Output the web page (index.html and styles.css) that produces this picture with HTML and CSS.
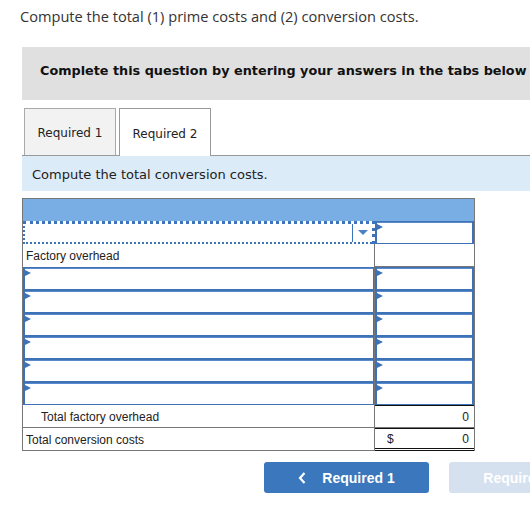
FILE: index.html
```html
<!DOCTYPE html>
<html>
<head>
<meta charset="utf-8">
<link rel="stylesheet" href="styles.css">
</head>
<body>
<p class="question">Compute the total (1) prime costs and (2) conversion costs.</p>
<div class="banner">Complete this question by entering your answers in the tabs below</div>
<div class="tabs">
  <div class="tab">Required 1</div>
  <div class="tab active">Required 2</div>
</div>
<div class="instr">Compute the total conversion costs.</div>
<div class="tbl">
  <div class="row head"></div>
  <div class="row">
    <div class="cell left select"><span class="dd"><span class="arrow"></span></span></div>
    <div class="cell right input"><span class="tri"></span></div>
  </div>
  <div class="row">
    <div class="cell left text">Factory overhead</div>
    <div class="cell right plain"></div>
  </div>
  <div class="row">
    <div class="cell left input"><span class="tri"></span></div>
    <div class="cell right input"><span class="tri"></span></div>
  </div>
  <div class="row">
    <div class="cell left input"><span class="tri"></span></div>
    <div class="cell right input"><span class="tri"></span></div>
  </div>
  <div class="row">
    <div class="cell left input"><span class="tri"></span></div>
    <div class="cell right input"><span class="tri"></span></div>
  </div>
  <div class="row">
    <div class="cell left input"><span class="tri"></span></div>
    <div class="cell right input"><span class="tri"></span></div>
  </div>
  <div class="row">
    <div class="cell left input"><span class="tri"></span></div>
    <div class="cell right input"><span class="tri"></span></div>
  </div>
  <div class="row">
    <div class="cell left input"><span class="tri"></span></div>
    <div class="cell right input"><span class="tri"></span></div>
  </div>
  <div class="row">
    <div class="cell left text total indent">Total factory overhead</div>
    <div class="cell right value"><span></span><span>0</span></div>
  </div>
  <div class="row">
    <div class="cell left text total">Total conversion costs</div>
    <div class="cell right value final"><span>$</span><span>0</span></div>
  </div>
</div>
<div class="nav">
  <div class="btn prev"><svg class="chev" width="8" height="12" viewBox="0 0 8 12"><path d="M6.5 1 L2 6 L6.5 11" fill="none" stroke="#fff" stroke-width="2.2"/></svg>Required 1</div>
  <div class="btn next">Required 2<svg class="chev" width="8" height="12" viewBox="0 0 8 12"><path d="M1.5 1 L6 6 L1.5 11" fill="none" stroke="#fff" stroke-width="2.2"/></svg></div>
</div>
</body>
</html>
```
FILE: styles.css
```css
html, body {
  margin: 0;
  padding: 0;
  background: #fff;
  overflow: hidden;
}
body {
  width: 530px;
  height: 505px;
}
.question {
  margin: 6px 0 0 20px;
  font-family: "Open Sans", "Liberation Sans", sans-serif;
  font-size: 14.6px;
  line-height: 20px;
  color: #333;
  white-space: nowrap;
}
.banner {
  margin: 21px 0 0 22px;
  height: 53px;
  background: #e0e0e0;
  box-sizing: border-box;
  padding: 0 0 6px 18px;
  font-family: "DejaVu Sans", Verdana, sans-serif;
  font-weight: bold;
  font-size: 12.8px;
  color: #111;
  white-space: nowrap;
  overflow: hidden;
  display: flex;
  align-items: center;
}
.tabs {
  margin: 8px 0 0 22px;
  padding-left: 2px;
  display: flex;
  gap: 3px;
  border-bottom: 1px solid #999;
  height: 47px;
  box-sizing: content-box;
}
.tab {
  width: 92px;
  height: 47px;
  box-sizing: border-box;
  border: 1px solid #aaa;
  border-bottom: none;
  background: #f2f2f2;
  font-family: "DejaVu Sans", Verdana, sans-serif;
  font-size: 12px;
  color: #222;
  display: flex;
  align-items: center;
  justify-content: center;
  padding-top: 2px;
}
.tab.active {
  background: #fff;
  border-color: #999;
  height: 48px;
  position: relative;
  z-index: 1;
}
.instr {
  margin-left: 22px;
  height: 35px;
  background: #dcebf8;
  padding-left: 10px;
  font-family: "DejaVu Sans", Verdana, sans-serif;
  font-size: 13px;
  line-height: 37px;
  color: #222;
}
.tbl {
  margin: 7px 0 0 22px;
  width: 453px;
  box-sizing: border-box;
  border: 1px solid #777;
  border-bottom: none;
}
.row {
  display: flex;
  height: 23px;
}
.row.head {
  height: 22px;
  background: #78aee4;
}
.cell {
  height: 23px;
  box-sizing: border-box;
  position: relative;
}
.left {
  width: 352px;
  border-right: 1px solid #777;
}
.right {
  width: 99px;
}
.input {
  border: 2px solid #3d72b6;
  border-top-width: 1px;
  border-bottom-width: 1px;
  box-shadow: inset 0 1px 0 #5a8acb;
}
.left.input {
  border-right: 1px solid #3d72b6;
  width: 351px;
  margin-right: 1px;
  box-shadow: inset 0 1px 0 #5a8acb, 1px 0 0 #777;
}
.tri {
  position: absolute;
  left: 0;
  top: 2px;
  width: 0;
  height: 0;
  border-left: 6px solid #3d72b6;
  border-top: 3px solid transparent;
  border-bottom: 3px solid transparent;
}
.select {
  border: 2px dotted #3d73b9;
  border-right: 3px dotted #3d73b9;
  border-top-width: 3px;
  display: flex;
  justify-content: flex-end;
}
.dd {
  width: 19px;
  height: 100%;
  border-left: 1px solid #3d73b9;
  display: flex;
  align-items: center;
  justify-content: center;
}
.arrow {
  width: 0;
  height: 0;
  border-top: 5px solid #4a80c4;
  border-left: 5px solid transparent;
  border-right: 5px solid transparent;
  margin-top: -1px;
}
.text {
  font-family: "Liberation Sans", Arial, sans-serif;
  font-size: 12px;
  color: #222;
  padding-left: 3px;
  padding-top: 2px;
  line-height: 20px;
}
.total {
  border-bottom: 1px solid #777;
}
.indent {
  padding-left: 18px;
}
.plain {
  border-bottom: 1px solid #777;
}
.value {
  border-top: 1px solid #111;
  border-bottom: 1px solid #777;
  display: flex;
  justify-content: space-between;
  padding: 1px 5px 0 12px;
  font-family: "Liberation Sans", Arial, sans-serif;
  font-size: 12px;
  color: #222;
  line-height: 20px;
}
.value.final {
  border-bottom: 3px double #111;
  line-height: 19px;
}
.nav {
  margin-top: 11px;
  padding-left: 264px;
  display: flex;
  gap: 20px;
}
.btn {
  flex: none;
  width: 165px;
  height: 31px;
  border-radius: 3px;
  font-family: "Liberation Sans", Arial, sans-serif;
  font-weight: bold;
  font-size: 14px;
  color: #fff;
  display: flex;
  align-items: center;
  justify-content: center;
}
.prev {
  background: #3a77bd;
}
.next {
  background: #d5e1ef;
}
.chev {
  margin-right: 16px;
}
.next .chev {
  margin: 0 0 0 16px;
}
```
